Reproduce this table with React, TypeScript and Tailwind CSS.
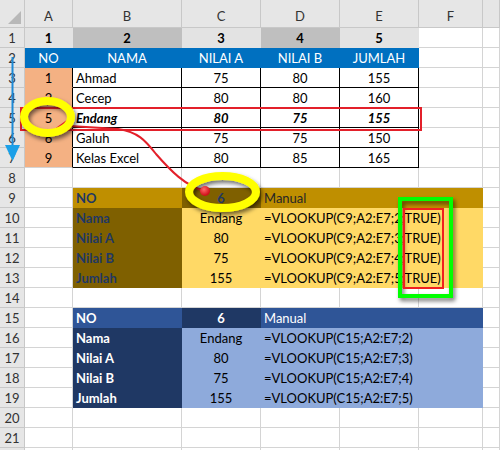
import React, { ReactNode } from "react";

const GRID = "grid grid-cols-[25px_48px_109px_79px_79px_79px_64px_17px]";

function Cell({ c = "border-[#d4d4d4] bg-white", children }: { c?: string; children?: ReactNode }) {
  return (
    <div className={`box-border flex h-5 items-center overflow-hidden whitespace-nowrap border-r border-b px-[3px] pt-[2px] ${c}`}>
      {children}
    </div>
  );
}

function RowNum({ n }: { n?: number }) {
  return (
    <div className="box-border flex h-5 items-center justify-center border-r border-b border-[#c8c8c8] bg-[#e6e6e6] pt-[2px] text-[#333]">
      {n}
    </div>
  );
}

function Blank() {
  return <Cell />;
}

const tbl = "border-black bg-white";
const sal = "border-r-black border-b-transparent bg-[#f4b183] justify-center";

export default function App() {
  const data = [
    ["1", "Ahmad", "75", "80", "155"],
    ["2", "Cecep", "80", "80", "160"],
    ["5", "Endang", "80", "75", "155"],
    ["6", "Galuh", "75", "75", "150"],
    ["9", "Kelas Excel", "80", "85", "165"],
  ];
  const gold = [
    ["Nama", "Endang", "=VLOOKUP(C9;A2:E7;2;TRUE)"],
    ["Nilai A", "80", "=VLOOKUP(C9;A2:E7;3;TRUE)"],
    ["Nilai B", "75", "=VLOOKUP(C9;A2:E7;4;TRUE)"],
    ["Jumlah", "155", "=VLOOKUP(C9;A2:E7;5;TRUE)"],
  ];
  const blue = [
    ["Nama", "Endang", "=VLOOKUP(C15;A2:E7;2)"],
    ["Nilai A", "80", "=VLOOKUP(C15;A2:E7;3)"],
    ["Nilai B", "75", "=VLOOKUP(C15;A2:E7;4)"],
    ["Jumlah", "155", "=VLOOKUP(C15;A2:E7;5)"],
  ];

  return (
    <div className="relative h-[450px] w-[500px] overflow-hidden bg-white font-['Lato',sans-serif] text-[13px] leading-none text-black">
      <div className={GRID}>
        {/* column header */}
        <div className="relative box-border h-[28px] border-r border-b border-[#c8c8c8] bg-[#e6e6e6]">
          <div className="absolute bottom-[3px] right-[3px] h-0 w-0 border-l-[13px] border-t-[13px] border-l-transparent border-t-transparent border-r-0 border-b-[13px] border-b-[#b8b8b8] border-r-transparent" />
        </div>
        {["A", "B", "C", "D", "E", "F", ""].map((l, i) => (
          <div
            key={i}
            className="box-border flex h-[28px] items-end justify-center border-r border-b border-[#c8c8c8] bg-[#e6e6e6] pb-[4px] text-[#333]"
          >
            {l}
          </div>
        ))}

        {/* row 1 */}
        <RowNum n={1} />
        <Cell c="border-transparent bg-[#e3e3e3] justify-center font-bold">1</Cell>
        <Cell c="border-transparent bg-[#bfbfbf] justify-center font-bold">2</Cell>
        <Cell c="border-transparent bg-[#e3e3e3] justify-center font-bold">3</Cell>
        <Cell c="border-transparent bg-[#bfbfbf] justify-center font-bold">4</Cell>
        <Cell c="border-transparent bg-[#e3e3e3] justify-center font-bold">5</Cell>
        <Blank />
        <Blank />

        {/* row 2 */}
        <RowNum n={2} />
        {["NO", "NAMA", "NILAI A", "NILAI B", "JUMLAH"].map((t) => (
          <Cell key={t} c="border-transparent bg-[#0070c0] justify-center text-white">
            {t}
          </Cell>
        ))}
        <Blank />
        <Blank />

        {/* rows 3-7 */}
        {data.map((r, i) => {
          const em = i === 2 ? "font-bold italic" : "";
          return (
            <React.Fragment key={i}>
              <RowNum n={i + 3} />
              <Cell c={i === 4 ? "border-r-black border-b-[#d4d4d4] bg-[#f4b183] justify-center" : sal}>{r[0]}</Cell>
              <Cell c={`${tbl} ${em}`}>{r[1]}</Cell>
              <Cell c={`${tbl} justify-center ${em}`}>{r[2]}</Cell>
              <Cell c={`${tbl} justify-center ${em}`}>{r[3]}</Cell>
              <Cell c={`${tbl} justify-center ${em}`}>{r[4]}</Cell>
              <Blank />
              <Blank />
            </React.Fragment>
          );
        })}

        {/* row 8 */}
        <RowNum n={8} />
        {[0, 1, 2, 3, 4, 5, 6].map((k) => (
          <Blank key={k} />
        ))}

        {/* row 9 */}
        <RowNum n={9} />
        <Blank />
        <Cell c="border-transparent bg-[#bf8f00] font-bold text-[#1f3864]">NO</Cell>
        <Cell c="border-transparent bg-[#7f6000] justify-center font-bold text-[#1f3864]">6</Cell>
        <div className="col-span-3">
          <Cell c="border-transparent bg-[#bf8f00] text-[#262626]">Manual</Cell>
        </div>
        <Blank />

        {gold.map((r, i) => (
          <React.Fragment key={i}>
            <RowNum n={i + 10} />
            <Blank />
            <Cell c="border-transparent bg-[#7f6000] font-bold text-[#1f3864]">{r[0]}</Cell>
            <Cell c="border-transparent bg-[#ffd966] justify-center">{r[1]}</Cell>
            <div className="col-span-3">
              <Cell c="border-transparent bg-[#ffd966]">{r[2]}</Cell>
            </div>
            <Blank />
          </React.Fragment>
        ))}

        {/* row 14 */}
        <RowNum n={14} />
        {[0, 1, 2, 3, 4, 5, 6].map((k) => (
          <Blank key={k} />
        ))}

        {/* row 15 */}
        <RowNum n={15} />
        <Blank />
        <Cell c="border-transparent bg-[#2f5597] font-bold text-white">NO</Cell>
        <Cell c="border-transparent bg-[#1f3864] justify-center font-bold text-white">6</Cell>
        <div className="col-span-3">
          <Cell c="border-transparent bg-[#2f5597] text-white">Manual</Cell>
        </div>
        <Blank />

        {blue.map((r, i) => (
          <React.Fragment key={i}>
            <RowNum n={i + 16} />
            <Blank />
            <Cell c="border-transparent bg-[#1f3864] font-bold text-white">{r[0]}</Cell>
            <Cell c="border-transparent bg-[#8eaadb] justify-center">{r[1]}</Cell>
            <div className="col-span-3">
              <Cell c="border-transparent bg-[#8eaadb]">{r[2]}</Cell>
            </div>
            <Blank />
          </React.Fragment>
        ))}

        {[20, 21, 0].map((n) => (
          <React.Fragment key={n}>
            <RowNum n={n || undefined} />
            {[0, 1, 2, 3, 4, 5, 6].map((k) => (
              <Blank key={k} />
            ))}
          </React.Fragment>
        ))}
      </div>

      {/* annotations */}
      <svg className="pointer-events-none absolute inset-0" width="500" height="450" viewBox="0 0 500 450">
        <defs>
          <filter id="sh" x="-30%" y="-30%" width="160%" height="160%">
            <feDropShadow dx="2" dy="3" stdDeviation="2" floodColor="#000" floodOpacity="0.55" />
          </filter>
          <radialGradient id="dot" cx="40%" cy="35%" r="60%">
            <stop offset="0%" stopColor="#ff6a6a" />
            <stop offset="100%" stopColor="#d0101a" />
          </radialGradient>
        </defs>

        {/* red row highlight */}
        <rect x="21" y="108" width="400" height="22" fill="none" stroke="#e3202a" strokeWidth="2" />

        {/* blue arrow */}
        <line x1="12.5" y1="57" x2="12.5" y2="147" stroke="#1c8ad6" strokeWidth="2" />
        <polygon points="5,145 20,145 12.5,161" fill="#1ba0e8" />

        {/* red curve */}
        <path d="M205 191 C185 186 170 170 156 154 C145 140 138 132 118 129 L70 126" fill="none" stroke="#e3202a" strokeWidth="2" />
        <polygon points="53,130 68,119 71,129" fill="#e3202a" />

        {/* yellow ellipses */}
        <ellipse cx="47.5" cy="117" rx="23.5" ry="16" fill="none" stroke="#ffff00" strokeWidth="8" filter="url(#sh)" />
        <ellipse cx="222.5" cy="192" rx="33.5" ry="16" fill="none" stroke="#ffff00" strokeWidth="8" filter="url(#sh)" />
        <circle cx="205" cy="191" r="5" fill="url(#dot)" />

        {/* green + red boxes */}
        <rect x="400" y="199" width="51" height="97" fill="none" stroke="#00ff00" strokeWidth="4" filter="url(#sh)" />
        <rect x="404" y="209" width="39" height="79" fill="none" stroke="#f02020" strokeWidth="2" />
      </svg>
    </div>
  );
}
